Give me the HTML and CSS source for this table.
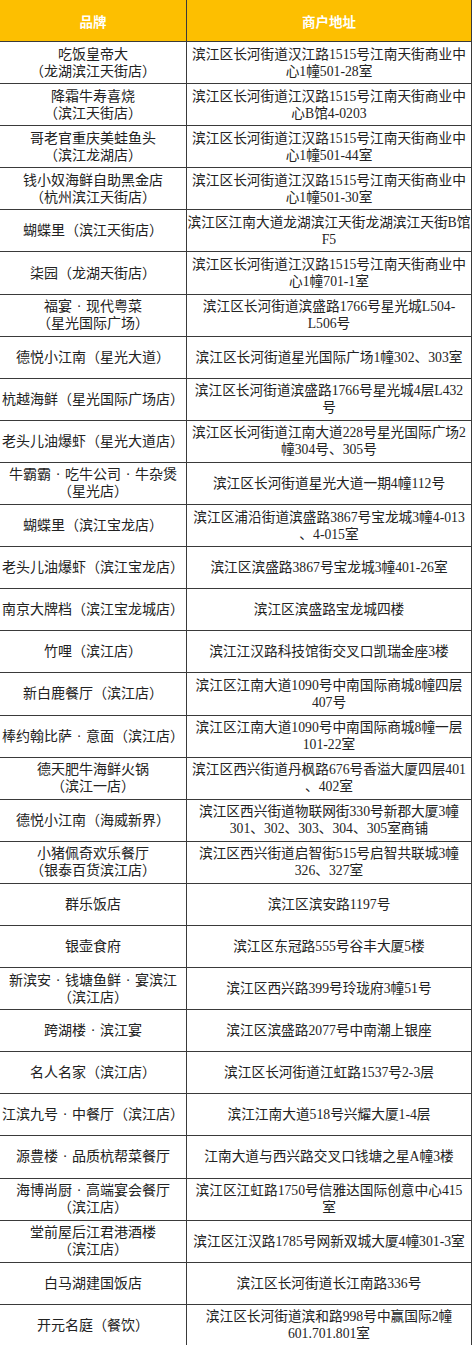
FILE: index.html
```html
<!DOCTYPE html>
<html lang="zh-CN">
<head>
<meta charset="utf-8">
<title>滨江商户列表</title>
<link rel="stylesheet" href="styles.css">
</head>
<body>
<div class="sheet">
  <div class="row head"><div class="cell brand"><p class="txt">品牌</p></div><div class="cell addr"><p class="txt">商户地址</p></div></div>
  <div class="row"><div class="cell brand"><p class="txt">吃饭皇帝大<br>（龙湖滨江天街店）</p></div><div class="cell addr"><p class="txt">滨江区长河街道汉江路1515号江南天街商业中<br>心1幢501-28室</p></div></div>
  <div class="row"><div class="cell brand"><p class="txt">降霜牛寿喜烧<br>（滨江天街店）</p></div><div class="cell addr"><p class="txt">滨江区长河街道江汉路1515号江南天街商业中<br>心B馆4-0203</p></div></div>
  <div class="row"><div class="cell brand"><p class="txt">哥老官重庆美蛙鱼头<br>（滨江龙湖店）</p></div><div class="cell addr"><p class="txt">滨江区长河街道江汉路1515号江南天街商业中<br>心1幢501-44室</p></div></div>
  <div class="row"><div class="cell brand"><p class="txt">钱小奴海鲜自助黑金店<br>（杭州滨江天街店）</p></div><div class="cell addr"><p class="txt">滨江区长河街道江汉路1515号江南天街商业中<br>心1幢501-30室</p></div></div>
  <div class="row"><div class="cell brand"><p class="txt">蝴蝶里（滨江天街店）</p></div><div class="cell addr"><p class="txt">滨江区江南大道龙湖滨江天街龙湖滨江天街B馆<br>F5</p></div></div>
  <div class="row"><div class="cell brand"><p class="txt">柒园（龙湖天街店）</p></div><div class="cell addr"><p class="txt">滨江区长河街道江汉路1515号江南天街商业中<br>心1幢701-1室</p></div></div>
  <div class="row"><div class="cell brand"><p class="txt">福宴<span class="dot">·</span>现代粤菜<br>（星光国际广场）</p></div><div class="cell addr"><p class="txt">滨江区长河街道滨盛路1766号星光城L504-<br>L506号</p></div></div>
  <div class="row"><div class="cell brand"><p class="txt">德悦小江南（星光大道）</p></div><div class="cell addr"><p class="txt">滨江区长河街道星光国际广场1幢302、303室</p></div></div>
  <div class="row"><div class="cell brand"><p class="txt">杭越海鲜（星光国际广场店）</p></div><div class="cell addr"><p class="txt">滨江区长河街道滨盛路1766号星光城4层L432<br>号</p></div></div>
  <div class="row"><div class="cell brand"><p class="txt">老头儿油爆虾（星光大道店）</p></div><div class="cell addr"><p class="txt">滨江区长河街道江南大道228号星光国际广场2<br>幢304号、305号</p></div></div>
  <div class="row"><div class="cell brand"><p class="txt">牛霸霸<span class="dot">·</span>吃牛公司<span class="dot">·</span>牛杂煲<br>（星光店）</p></div><div class="cell addr"><p class="txt">滨江区长河街道星光大道一期4幢112号</p></div></div>
  <div class="row"><div class="cell brand"><p class="txt">蝴蝶里（滨江宝龙店）</p></div><div class="cell addr"><p class="txt">滨江区浦沿街道滨盛路3867号宝龙城3幢4-013<br>、4-015室</p></div></div>
  <div class="row"><div class="cell brand"><p class="txt">老头儿油爆虾（滨江宝龙店）</p></div><div class="cell addr"><p class="txt">滨江区滨盛路3867号宝龙城3幢401-26室</p></div></div>
  <div class="row"><div class="cell brand"><p class="txt">南京大牌档（滨江宝龙城店）</p></div><div class="cell addr"><p class="txt">滨江区滨盛路宝龙城四楼</p></div></div>
  <div class="row"><div class="cell brand"><p class="txt">竹哩（滨江店）</p></div><div class="cell addr"><p class="txt">滨江江汉路科技馆街交叉口凯瑞金座3楼</p></div></div>
  <div class="row"><div class="cell brand"><p class="txt">新白鹿餐厅（滨江店）</p></div><div class="cell addr"><p class="txt">滨江区江南大道1090号中南国际商城8幢四层<br>407号</p></div></div>
  <div class="row"><div class="cell brand"><p class="txt">棒约翰比萨<span class="dot">·</span>意面（滨江店）</p></div><div class="cell addr"><p class="txt">滨江区江南大道1090号中南国际商城8幢一层<br>101-22室</p></div></div>
  <div class="row"><div class="cell brand"><p class="txt">德天肥牛海鲜火锅<br>（滨江一店）</p></div><div class="cell addr"><p class="txt">滨江区西兴街道丹枫路676号香溢大厦四层401<br>、402室</p></div></div>
  <div class="row"><div class="cell brand"><p class="txt">德悦小江南（海威新界）</p></div><div class="cell addr"><p class="txt">滨江区西兴街道物联网街330号新郡大厦3幢<br>301、302、303、304、305室商铺</p></div></div>
  <div class="row"><div class="cell brand"><p class="txt">小猪佩奇欢乐餐厅<br>（银泰百货滨江店）</p></div><div class="cell addr"><p class="txt">滨江区西兴街道启智街515号启智共联城3幢<br>326、327室</p></div></div>
  <div class="row"><div class="cell brand"><p class="txt">群乐饭店</p></div><div class="cell addr"><p class="txt">滨江区滨安路1197号</p></div></div>
  <div class="row"><div class="cell brand"><p class="txt">银壶食府</p></div><div class="cell addr"><p class="txt">滨江区东冠路555号谷丰大厦5楼</p></div></div>
  <div class="row"><div class="cell brand"><p class="txt">新滨安<span class="dot">·</span>钱塘鱼鲜<span class="dot">·</span>宴滨江<br>（滨江店）</p></div><div class="cell addr"><p class="txt">滨江区西兴路399号玲珑府3幢51号</p></div></div>
  <div class="row"><div class="cell brand"><p class="txt">跨湖楼<span class="dot">·</span>滨江宴</p></div><div class="cell addr"><p class="txt">滨江区滨盛路2077号中南潮上银座</p></div></div>
  <div class="row"><div class="cell brand"><p class="txt">名人名家（滨江店）</p></div><div class="cell addr"><p class="txt">滨江区长河街道江虹路1537号2-3层</p></div></div>
  <div class="row"><div class="cell brand"><p class="txt">江滨九号<span class="dot">·</span>中餐厅（滨江店）</p></div><div class="cell addr"><p class="txt">滨江江南大道518号兴耀大厦1-4层</p></div></div>
  <div class="row"><div class="cell brand"><p class="txt">源豊楼<span class="dot">·</span>品质杭帮菜餐厅</p></div><div class="cell addr"><p class="txt">江南大道与西兴路交叉口钱塘之星A幢3楼</p></div></div>
  <div class="row"><div class="cell brand"><p class="txt">海博尚厨<span class="dot">·</span>高端宴会餐厅<br>（滨江店）</p></div><div class="cell addr"><p class="txt">滨江区江虹路1750号信雅达国际创意中心415<br>室</p></div></div>
  <div class="row"><div class="cell brand"><p class="txt">堂前屋后江君港酒楼<br>（滨江店）</p></div><div class="cell addr"><p class="txt">滨江区江汉路1785号网新双城大厦4幢301-3室</p></div></div>
  <div class="row"><div class="cell brand"><p class="txt">白马湖建国饭店</p></div><div class="cell addr"><p class="txt">滨江区长河街道长江南路336号</p></div></div>
  <div class="row"><div class="cell brand"><p class="txt">开元名庭（餐饮）</p></div><div class="cell addr"><p class="txt">滨江区长河街道滨和路998号中赢国际2幢<br>601.701.801室</p></div></div>
</div>
</body>
</html>
```

FILE: styles.css
```css
body {
  margin: 0;
  background: #ffffff;
}

.sheet {
  width: 472px;
  font-family: "Liberation Serif", "Noto Sans CJK SC", serif;
  color: #222222;
}

.row {
  display: grid;
  grid-template-columns: 187px 285px;
  height: 42.1px;
  box-sizing: border-box;
  border-bottom: 1px solid #3a3a3a;
}

.cell {
  display: flex;
  align-items: center;
  justify-content: center;
  border-right: 1px solid #3a3a3a;
  box-sizing: border-box;
  min-width: 0;
}

.txt {
  margin: 0;
  text-align: center;
  white-space: nowrap;
  line-height: 17px;
}

.brand {
  font-size: 14px;
}

.addr {
  font-size: 13.7px;
}

.head {
  height: 42px;
  background: #fdbf00;
}

.head .cell {
  color: #ffffff;
  font-family: "Noto Sans CJK SC", sans-serif;
  font-weight: bold;
  font-size: 13.5px;
  padding-top: 1px;
}

.dot {
  display: inline-block;
  width: 1em;
  text-align: center;
}
```
